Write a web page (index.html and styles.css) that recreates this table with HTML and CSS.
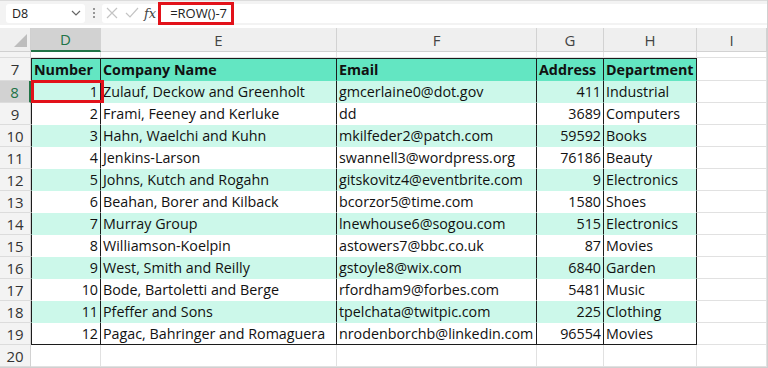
FILE: index.html
```html
<!DOCTYPE html>
<html>
<head>
<meta charset="utf-8">
<link rel="stylesheet" href="styles.css">
</head>
<body>
<div class="app">
  <div class="fbar">
    <div class="namebox"><span>D8</span><svg class="chev" width="10" height="6" viewBox="0 0 10 6"><path d="M1 1 L5 5 L9 1" fill="none" stroke="#666" stroke-width="1.2"/></svg></div>
    <div class="dots"><i></i><i></i><i></i></div>
    <div class="finput">
      <svg class="ico" width="12" height="12" viewBox="0 0 12 12"><path d="M1 1 L11 11 M11 1 L1 11" stroke="#c4c4c4" stroke-width="1.2"/></svg>
      <svg class="ico" width="14" height="12" viewBox="0 0 14 12"><path d="M1 6 L5 10 L13 1" fill="none" stroke="#c4c4c4" stroke-width="1.2"/></svg>
      <span class="fx">fx</span>
      <div class="formula">=ROW()-7</div>
    </div>
  </div>
  <div class="sheet">
    <div class="corner"><div class="tri"></div></div>
    <div class="ch sel">D</div><div class="ch">E</div><div class="ch">F</div><div class="ch">G</div><div class="ch">H</div><div class="ch">I</div>

    <div class="rh"></div><div class="c"></div><div class="c"></div><div class="c"></div><div class="c"></div><div class="c"></div><div class="c"></div>

    <div class="rh">7</div><div class="c t hd first">Number</div><div class="c t hd">Company Name</div><div class="c t hd">Email</div><div class="c t hd">Address</div><div class="c t hd">Department</div><div class="c"></div>
    <div class="rh rsel">8</div><div class="c t a first r active">1</div><div class="c t a">Zulauf, Deckow and Greenholt</div><div class="c t a">gmcerlaine0@dot.gov</div><div class="c t a r">411</div><div class="c t a">Industrial</div><div class="c"></div>
    <div class="rh">9</div><div class="c t first r">2</div><div class="c t">Frami, Feeney and Kerluke</div><div class="c t">dd</div><div class="c t r">3689</div><div class="c t">Computers</div><div class="c"></div>
    <div class="rh">10</div><div class="c t a first r">3</div><div class="c t a">Hahn, Waelchi and Kuhn</div><div class="c t a">mkilfeder2@patch.com</div><div class="c t a r">59592</div><div class="c t a">Books</div><div class="c"></div>
    <div class="rh">11</div><div class="c t first r">4</div><div class="c t">Jenkins-Larson</div><div class="c t">swannell3@wordpress.org</div><div class="c t r">76186</div><div class="c t">Beauty</div><div class="c"></div>
    <div class="rh">12</div><div class="c t a first r">5</div><div class="c t a">Johns, Kutch and Rogahn</div><div class="c t a">gitskovitz4@eventbrite.com</div><div class="c t a r">9</div><div class="c t a">Electronics</div><div class="c"></div>
    <div class="rh">13</div><div class="c t first r">6</div><div class="c t">Beahan, Borer and Kilback</div><div class="c t">bcorzor5@time.com</div><div class="c t r">1580</div><div class="c t">Shoes</div><div class="c"></div>
    <div class="rh">14</div><div class="c t a first r">7</div><div class="c t a">Murray Group</div><div class="c t a">lnewhouse6@sogou.com</div><div class="c t a r">515</div><div class="c t a">Electronics</div><div class="c"></div>
    <div class="rh">15</div><div class="c t first r">8</div><div class="c t">Williamson-Koelpin</div><div class="c t">astowers7@bbc.co.uk</div><div class="c t r">87</div><div class="c t">Movies</div><div class="c"></div>
    <div class="rh">16</div><div class="c t a first r">9</div><div class="c t a">West, Smith and Reilly</div><div class="c t a">gstoyle8@wix.com</div><div class="c t a r">6840</div><div class="c t a">Garden</div><div class="c"></div>
    <div class="rh">17</div><div class="c t first r">10</div><div class="c t">Bode, Bartoletti and Berge</div><div class="c t">rfordham9@forbes.com</div><div class="c t r">5481</div><div class="c t">Music</div><div class="c"></div>
    <div class="rh">18</div><div class="c t a first r">11</div><div class="c t a">Pfeffer and Sons</div><div class="c t a">tpelchata@twitpic.com</div><div class="c t a r">225</div><div class="c t a">Clothing</div><div class="c"></div>
    <div class="rh">19</div><div class="c t first r last">12</div><div class="c t last">Pagac, Bahringer and Romaguera</div><div class="c t last">nrodenborchb@linkedin.com</div><div class="c t r last">96554</div><div class="c t last">Movies</div><div class="c"></div>
    <div class="rh">20</div><div class="c"></div><div class="c"></div><div class="c"></div><div class="c"></div><div class="c"></div><div class="c"></div>
  </div>
</div>
</body>
</html>
```
FILE: styles.css
```css
* { box-sizing: border-box; }
html, body { margin: 0; padding: 0; }
body {
  width: 768px;
  height: 368px;
  overflow: hidden;
  background: #fff;
  font-family: "Open Sans", "Noto Sans", sans-serif;
}
.app { width: 768px; height: 368px; display: flex; flex-direction: column; border-right: 1px solid #d0d0d0; border-bottom: 1px solid #d0d0d0; }

.fbar {
  height: 27px;
  background: #f3f3f3;
  border-top: 1px solid #dcdcdc;
  display: flex;
  align-items: center;
  padding-left: 6px;
}
.namebox {
  width: 79px; height: 19px;
  background: #fff;
  border-radius: 3px;
  display: flex; align-items: center; justify-content: space-between;
  padding: 0 4px 0 6px;
  font-size: 12.5px; color: #222;
}
.dots { width: 17px; display: flex; flex-direction: column; align-items: center; gap: 2px; }
.dots i { display: block; width: 2px; height: 2px; background: #777; border-radius: 1px; }
.finput {
  flex: 1; height: 19px;
  background: #fff;
  border-radius: 3px 0 0 3px;
  display: flex; align-items: center;
  padding-left: 4px;
  gap: 7px;
}
.fx { font-family: "DejaVu Serif", "Liberation Serif", serif; font-style: italic; font-size: 13px; color: #444; margin-left: -2px; }
.formula {
  height: 23px;
  margin-left: -5px;
  width: 76px;
  border: 3px solid #e2121a;
  font-size: 13px;
  color: #222;
  display: flex; align-items: center;
  padding-left: 9px;
}

.sheet {
  display: grid;
  grid-template-columns: 31px 70px 236px 200px 67px 93px 1fr;
  grid-template-rows: 24px 6px 23px repeat(13, 22px);
  margin-top: 3px;
  font-size: 14.3px;
  color: #111;
}
.corner { background: #efefef; border-right: 1px solid #d0d0d0; border-bottom: 1px solid #d0d0d0; position: relative; }
.tri { position: absolute; right: 3px; bottom: 4px; width: 0; height: 0; border-style: solid; border-width: 0 0 13px 13px; border-color: transparent transparent #bdbdbd transparent; }
.ch {
  background: #efefef;
  border-right: 1px solid #d2d2d2;
  border-bottom: 1px solid #d2d2d2;
  display: flex; align-items: center; justify-content: center;
  color: #444; font-size: 15px;
}
.ch.sel { background: #d2d2d2; color: #217346; border-bottom: 2px solid #217346; }
.rh {
  background: #f3f3f3;
  border-right: 1px solid #d2d2d2;
  border-bottom: 1px solid #dcdcdc;
  display: flex; align-items: center; justify-content: center;
  color: #333; font-size: 15px;
}
.rh.rsel { background: #d2d2d2; color: #217346; border-right: 2px solid #217346; }
.c {
  border-right: 1px solid #e1e1e1;
  border-bottom: 1px solid #e1e1e1;
  padding: 0 2px;
  white-space: nowrap;
  overflow: hidden;
  line-height: 21px;
}
.t { border-right: 1px solid #1c1c1c; border-bottom-color: transparent; color: #111; }
.t.first { border-left: 1px solid #1c1c1c; }
.t.hd { background: #63e6c2; font-weight: 700; border-top: 1px solid #1c1c1c; }
.t.a { background: #ccf8ea; }
.t.last { border-bottom: 1px solid #1c1c1c; }
.r { text-align: right; }
.active { position: relative; overflow: visible; }
.active::after {
  content: "";
  position: absolute;
  left: -1px; top: -1px; right: -4px; bottom: -1px;
  border: 3px solid #e2121a;
}
```
